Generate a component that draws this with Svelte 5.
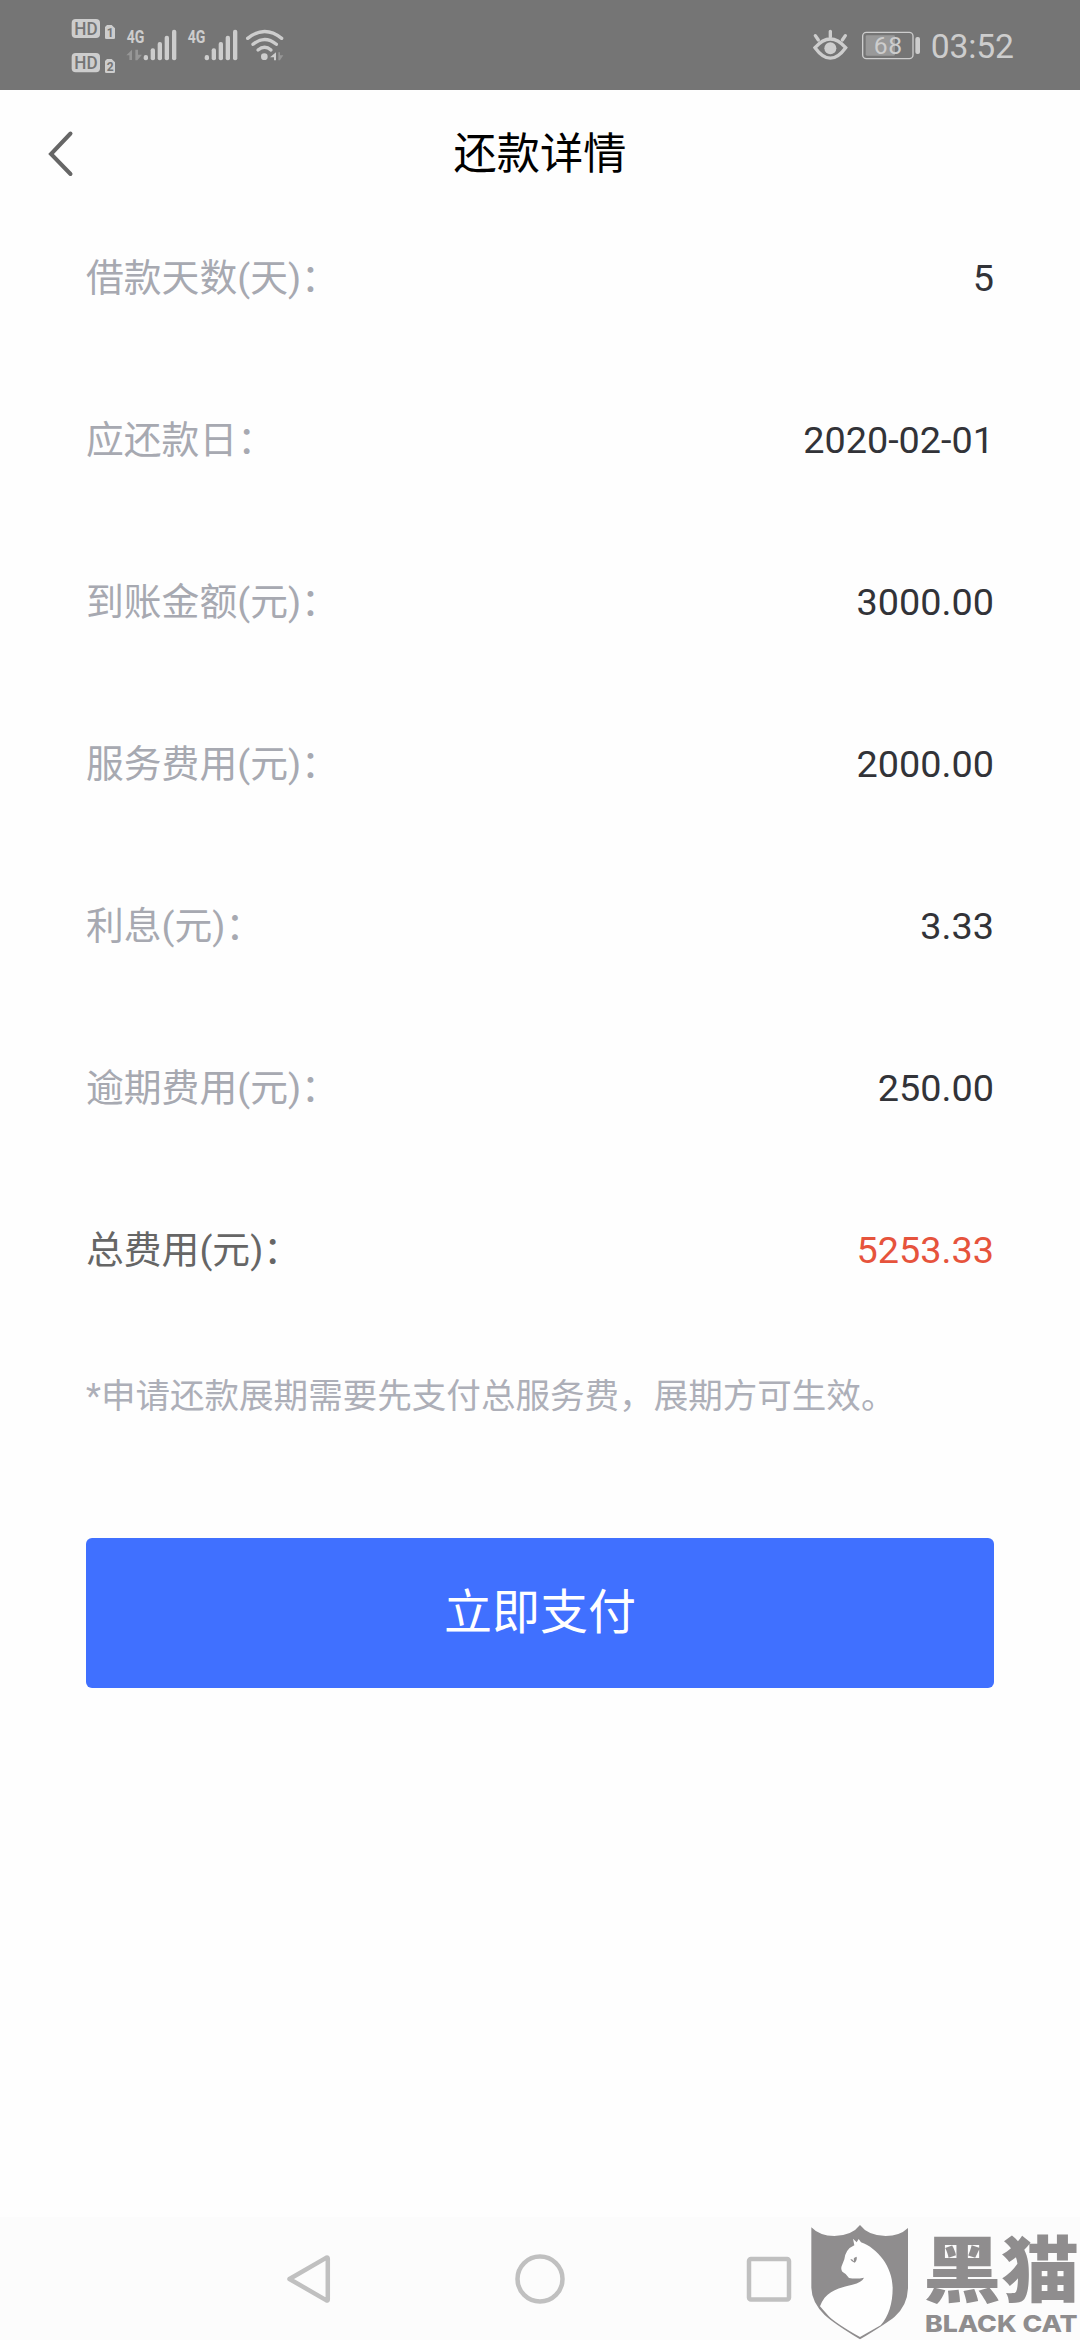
<script lang="ts">
  interface Row {
    label: string;
    value: string;
    total?: boolean;
  }

  const rows: Row[] = [
    { label: "借款天数(天)：", value: "5" },
    { label: "应还款日：", value: "2020-02-01" },
    { label: "到账金额(元)：", value: "3000.00" },
    { label: "服务费用(元)：", value: "2000.00" },
    { label: "利息(元)：", value: "3.33" },
    { label: "逾期费用(元)：", value: "250.00" },
    { label: "总费用(元)：", value: "5253.33", total: true },
  ];

  const signals = [0, 183];
</script>

<div class="page">
  <div class="status">
    <svg class="status-left" viewBox="0 0 720 270">
      <rect x="35" y="57" width="85" height="57" rx="12" />
      <text class="hd" x="43" y="105" textLength="70" lengthAdjust="spacingAndGlyphs">HD</text>
      <path d="M141 75h14l10 10v28q0 4-4 4h-22q-4 0-4-4v-32z" />
      <text class="sim" x="140" y="110">1</text>
      <rect x="35" y="159" width="85" height="58" rx="12" />
      <text class="hd" x="43" y="208" textLength="70" lengthAdjust="spacingAndGlyphs">HD</text>
      <path d="M141 177h14l10 10v28q0 4-4 4h-22q-4 0-4-4v-32z" />
      <text class="sim" x="140" y="213">2</text>

      {#each signals as x}
        <g transform="translate({x} 0)">
          <text class="net" x="200" y="129" textLength="53" lengthAdjust="spacingAndGlyphs">4G</text>
          <rect x="251" y="165" width="13" height="16" rx="6" />
          <rect x="272" y="145" width="13" height="36" rx="6" />
          <rect x="293" y="126" width="13" height="55" rx="6" />
          <rect x="314" y="107" width="13" height="74" rx="6" />
          <rect x="336" y="89" width="13" height="92" rx="6" />
        </g>
      {/each}
      <path class="dim" d="M216 149v31h-8v-14h-9zM226 149h8v15h12l-14 17h-6z" />

      <g class="wifi">
        <path d="M563 115q51-41 102 0" />
        <path d="M579 133q35-29 70 0" />
        <path d="M594 150q20-17 39 0" />
      </g>
      <circle cx="613" cy="170" r="10" />
      <path d="M648 157v24h-6v-9h-12z" />
      <path class="dim" d="M655 157h5v9h10l-10 15h-5z" />
    </svg>

    <svg class="status-right" viewBox="0 0 720 270">
      <g class="eye">
        <path d="M45 143q46-52 92 0q-46 63-92 0z" />
        <path d="M91 94v16M46 107l9 13M136 107l-9 13" />
      </g>
      <circle cx="91" cy="145" r="18" />
      <rect class="battery" x="188" y="97" width="151" height="79" rx="11" />
      <rect class="charge" x="197" y="106" width="88" height="61" rx="4" />
      <rect x="346" y="111" width="14" height="51" rx="6" />
      <text class="level" x="221" y="162" textLength="85">68</text>
      <text class="clock" x="392" y="174" textLength="250">03:52</text>
    </svg>
  </div>

  <header>
    <svg class="back" viewBox="0 0 30 50">
      <path d="M25.500 4.500 6 25l19.500 20" />
    </svg>
    <h1>还款详情</h1>
  </header>

  <main>
    <div class="rows">
      {#each rows as row}
        <div class="row" class:total={row.total}>
          <span class="label">{row.label}</span>
          <span class="value">{row.value}</span>
        </div>
      {/each}
    </div>
    <p>*申请还款展期需要先支付总服务费，展期方可生效。</p>
    <button type="button">立即支付</button>
  </main>

  <nav>
    <svg viewBox="0 0 50 50">
      <path d="M4.500 25 41.500 3.600Q42.800 3 42.800 4.500V45.500Q42.800 47 41.500 46.400L4.500 25z" />
    </svg>
    <svg viewBox="0 0 50 50"><circle cx="25" cy="25" r="22.500" /></svg>
    <svg viewBox="0 0 50 50"><rect x="4" y="5" width="40" height="40.500" rx="2" /></svg>
  </nav>

  <svg class="watermark" viewBox="0 0 900 420">
    <path
      d="M94 82Q119 108 163 108Q216 107 240 75Q264 107 317 108Q359 108 384 84V265Q382 317 344 350Q318 371 240 418Q162 371 134 345Q95 306 94 263z"
    />
    <path
      class="cat"
      d="M219 116L230 127L236 117L243 127C293 145 337 200 338 263C338 310 326 348 302 376L240 411Q166 369 145 347Q128 329 120 319C137 272 177 264 217 254Q246 247 252 233Q229 238 207 234Q198 220 187 215Q181 206 186 196L193 178Q197 147 223 136z"
    />
    <path d="M211 177q3 9 13 11q8-7 6-18q-7 1-9 6q2 5 0 8q-3-7-10-7z" />
    <text class="brand" x="430" y="288" textLength="468" lengthAdjust="spacingAndGlyphs">黑猫</text>
    <text class="brand-en" x="435" y="397" textLength="458" lengthAdjust="spacingAndGlyphs">BLACK CAT</text>
  </svg>
</div>

<style>
  :global(body) {
    background: #fefefe;
  }
  .page {
    position: relative;
    display: flex;
    flex-direction: column;
    width: 1080px;
    height: 2340px;
    overflow: hidden;
    background: #fefefe;
    font-family: Roboto, "Noto Sans CJK SC", sans-serif;
  }
  .status {
    display: flex;
    justify-content: space-between;
    height: 90px;
    padding: 0 40px 0 60px;
    background: #757575;
  }
  .status svg {
    width: 240px;
    height: 90px;
    fill: #cdcdcd;
  }
  .status .hd {
    font-size: 54px;
    font-weight: 500;
    fill: #757575;
  }
  .status .sim {
    font-size: 36px;
    font-weight: 700;
    fill: #757575;
  }
  .status .net {
    font-size: 56px;
    font-weight: 700;
  }
  .status .dim {
    fill: #969696;
  }
  .wifi,
  .eye {
    fill: none;
    stroke: #cdcdcd;
    stroke-width: 10;
    stroke-linecap: round;
  }
  .status .battery {
    fill: none;
    stroke: #cdcdcd;
    stroke-width: 4;
  }
  .status .charge {
    fill: #999;
  }
  .level {
    font-size: 74px;
  }
  .clock {
    font-size: 101px;
  }
  header {
    display: flex;
    align-items: center;
    height: 128px;
    padding: 0 45px;
  }
  .back {
    width: 30px;
    height: 50px;
    fill: none;
    stroke: #666;
    stroke-width: 4;
    stroke-linecap: round;
  }
  h1 {
    flex: 1;
    margin: 2px 30px 0 0;
    font-size: 43.200px;
    font-weight: 400;
    line-height: 60px;
    text-align: center;
    color: #000;
  }
  main {
    flex: 1;
    padding: 0 86px;
  }
  .rows {
    display: flex;
    flex-direction: column;
    gap: 42px;
  }
  .row {
    display: flex;
    align-items: center;
    justify-content: space-between;
    height: 120px;
    font-size: 37.800px;
    line-height: 60px;
  }
  .label {
    color: #a7a9b1;
  }
  .value {
    color: #323338;
  }
  .total .label {
    color: #666;
  }
  .total .value {
    color: #e6533c;
  }
  p {
    margin: 56px 0 112px;
    font-size: 34.560px;
    line-height: 60px;
    color: #adafb8;
  }
  button {
    display: block;
    width: 100%;
    height: 150px;
    padding: 0;
    border: 0;
    border-radius: 6px;
    background: #4070ff;
    font-family: inherit;
    font-size: 48px;
    line-height: 150px;
    color: #fff;
  }
  nav {
    display: flex;
    align-items: center;
    justify-content: center;
    gap: 180px;
    height: 123px;
    background: #fcfcfc;
  }
  nav svg {
    width: 50px;
    height: 50px;
    fill: none;
    stroke: #c0c0c0;
    stroke-width: 4.500;
    stroke-linejoin: round;
  }
  .watermark {
    position: absolute;
    right: 0;
    bottom: 0;
    width: 300px;
    height: 140px;
    fill: #8f8d8e;
  }
  .watermark .cat {
    fill: #fefefe;
  }
  .brand {
    font-family: "Noto Sans CJK SC", sans-serif;
    font-size: 216px;
    font-weight: 900;
  }
  .brand-en {
    font-family: Inter, "Liberation Sans", sans-serif;
    font-size: 67px;
    font-weight: 800;
  }
</style>
